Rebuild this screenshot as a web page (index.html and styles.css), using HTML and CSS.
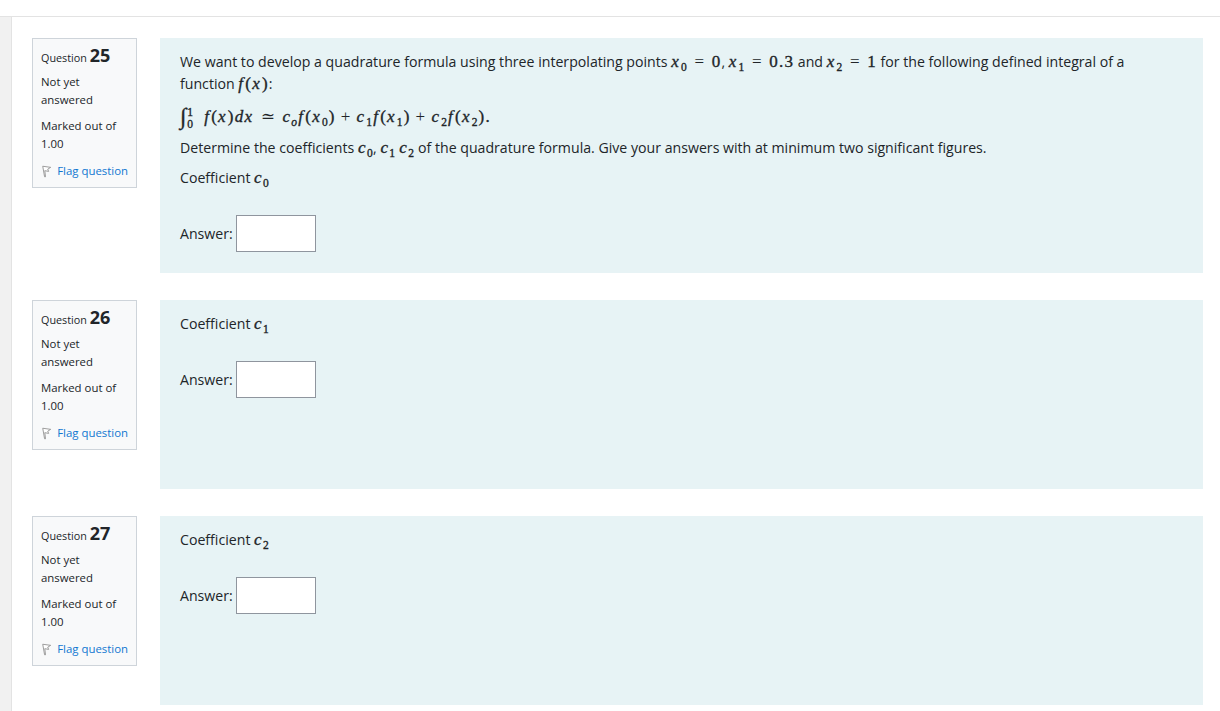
FILE: index.html
```html
<!DOCTYPE html>
<html lang="en">
<head>
  <meta charset="UTF-8">
  <title>Quiz</title>
  <link rel="stylesheet" href="styles.css">
</head>
<body>
  <div class="top-gap"></div>
  <main class="quiz-page">
    <section class="que que-first">
      <div class="info">
        <h3 class="qno">Question <b>25</b></h3>
        <div class="state">Not yet answered</div>
        <div class="grade">Marked out of 1.00</div>
        <div class="flag"><svg class="flag-icon" viewBox="0 0 10 13"><path d="M0.8 0.8 L9.4 2 L6.2 4 L7.2 6.4 L3 5.6 L3.8 12.2 L2.8 12.2 Z" fill="#fff" stroke="#8a8a8a" stroke-width="0.9"/></svg><a href="#">Flag question</a></div>
      </div>
      <div class="content">
        <p class="line-a">We want to develop a quadrature formula using three interpolating points <span class="m"><i>x</i><sub>0</sub><span class="op">=</span>0</span>, <span class="m"><i>x</i><sub>1</sub><span class="op">=</span>0.3</span> and <span class="m"><i>x</i><sub>2</sub><span class="op">=</span>1</span> for the following defined integral of a<br>function <span class="m"><i>f</i>(<i>x</i>)</span>:</p>
        <p class="formula"><span class="m"><span class="int">∫</span><span class="limits"><span>1</span><span>0</span></span><i>f</i>(<i>x</i>)<i>dx</i><span class="op">≃</span><i>c<sub>o</sub>f</i>(<i>x</i><sub>0</sub>)<span class="plus">+</span><i>c</i><sub>1</sub><i>f</i>(<i>x</i><sub>1</sub>)<span class="plus">+</span><i>c</i><sub>2</sub><i>f</i>(<i>x</i><sub>2</sub>).</span></p>
        <p class="line-c">Determine the coefficients <span class="m"><i>c</i><sub>0</sub></span>, <span class="m"><i>c</i><sub>1</sub></span> <span class="m"><i>c</i><sub>2</sub></span> of the quadrature formula. Give your answers with at minimum two significant figures.</p>
        <p class="line-d">Coefficient <span class="m"><i>c</i><sub>0</sub></span></p>
        <div class="answer"><label>Answer:</label><input type="text"></div>
      </div>
    </section>

    <section class="que">
      <div class="info">
        <h3 class="qno">Question <b>26</b></h3>
        <div class="state">Not yet answered</div>
        <div class="grade">Marked out of 1.00</div>
        <div class="flag"><svg class="flag-icon" viewBox="0 0 10 13"><path d="M0.8 0.8 L9.4 2 L6.2 4 L7.2 6.4 L3 5.6 L3.8 12.2 L2.8 12.2 Z" fill="#fff" stroke="#8a8a8a" stroke-width="0.9"/></svg><a href="#">Flag question</a></div>
      </div>
      <div class="content content-short">
        <p class="line-d">Coefficient <span class="m"><i>c</i><sub>1</sub></span></p>
        <div class="answer"><label>Answer:</label><input type="text"></div>
      </div>
    </section>

    <section class="que">
      <div class="info">
        <h3 class="qno">Question <b>27</b></h3>
        <div class="state">Not yet answered</div>
        <div class="grade">Marked out of 1.00</div>
        <div class="flag"><svg class="flag-icon" viewBox="0 0 10 13"><path d="M0.8 0.8 L9.4 2 L6.2 4 L7.2 6.4 L3 5.6 L3.8 12.2 L2.8 12.2 Z" fill="#fff" stroke="#8a8a8a" stroke-width="0.9"/></svg><a href="#">Flag question</a></div>
      </div>
      <div class="content content-short">
        <p class="line-d">Coefficient <span class="m"><i>c</i><sub>2</sub></span></p>
        <div class="answer"><label>Answer:</label><input type="text"></div>
      </div>
    </section>
  </main>
</body>
</html>
```

FILE: styles.css
```css
html, body {
  margin: 0;
  padding: 0;
  height: 711px;
  overflow: hidden;
  background: #fff;
}
body {
  font-family: 'Open Sans', 'Noto Sans', sans-serif;
  font-size: 14.15px;
  color: #212529;
}
.top-gap {
  height: 16px;
}
.quiz-page {
  margin: 0;
  height: 695px;
  border-top: 1px solid #e3e3e3;
  background: #fff;
  box-shadow: inset 11px 0 0 #f1f1f1, inset 12px 0 0 #e3e3e3;
  padding: 21px 17px 0 32px;
}
.que {
  display: flex;
  align-items: flex-start;
  gap: 23px;
  margin-bottom: 27px;
}
.info {
  box-sizing: border-box;
  width: 105px;
  height: 150px;
  flex: none;
  padding: 7px 8px 0;
  background: #f8f9fa;
  border: 1px solid #ced4da;
  font-size: 11.4px;
  line-height: 18px;
}
.qno {
  margin: 0 0 6px;
  font-size: 10.8px;
  font-weight: 400;
  line-height: 19px;
}
.qno b {
  font-size: 18px;
  font-weight: 700;
}
.state {
  margin-bottom: 8px;
}
.grade {
  margin-bottom: 9px;
}
.flag {
  display: flex;
  align-items: center;
  gap: 6px;
  padding-left: 1px;
  white-space: nowrap;
}
.flag a {
  color: #1177d1;
  text-decoration: none;
}
.flag-icon {
  width: 10px;
  height: 13px;
}
.content {
  box-sizing: border-box;
  width: 1043px;
  height: 235px;
  padding: 13px 20px 0;
  background: #e7f3f5;
  line-height: 22px;
}
.content-short {
  height: 189px;
}
.content p {
  margin: 0 0 8px;
}
.content .formula {
  height: 22px;
  margin-top: 11px;
  margin-bottom: 9px;
}
.line-d {
  margin-bottom: 16px;
}
.m {
  font-family: 'Liberation Serif', 'DejaVu Serif', serif;
  font-size: 17px;
  letter-spacing: 1.2px;
  color: #212529;
  -webkit-text-stroke: 0.35px #212529;
}
.line-c .m, .line-d .m {
  letter-spacing: 0.4px;
}
.m i {
  margin-right: 1px;
}
.m sub {
  font-size: 11.5px;
  line-height: 0;
}
.op {
  margin: 0 6.5px;
  -webkit-text-stroke: 0;
}
.plus {
  margin: 0 5px;
  -webkit-text-stroke: 0;
}
.int {
  font-size: 23px;
  line-height: 0;
  vertical-align: -2px;
  letter-spacing: 0;
}
.limits {
  display: inline-flex;
  flex-direction: column;
  vertical-align: middle;
  margin: 0 10px 0 1px;
  font-size: 11.5px;
  line-height: 12px;
}
.answer {
  display: flex;
  align-items: center;
  gap: 3px;
  margin-top: 26px;
}
.answer input {
  box-sizing: border-box;
  width: 80px;
  height: 37px;
  border: 1px solid #8f959e;
  background: #fff;
  padding: 0;
}
```
